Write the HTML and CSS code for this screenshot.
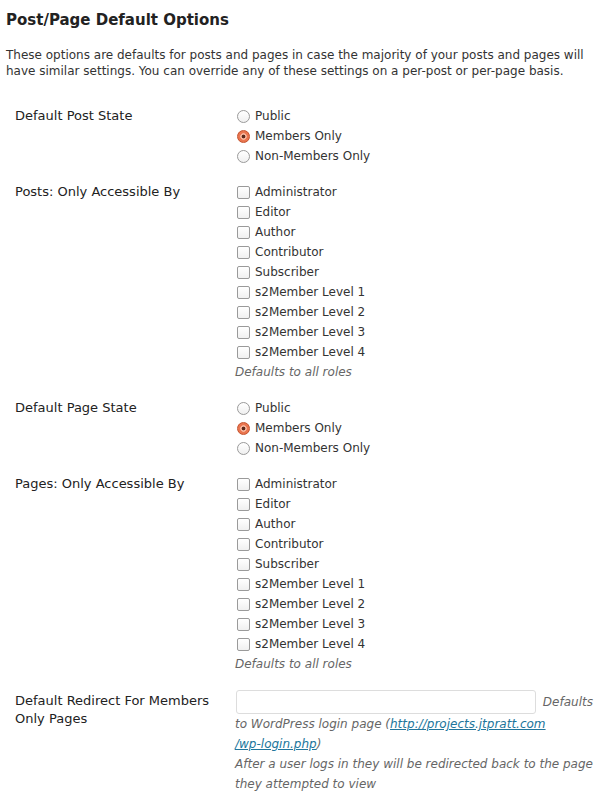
FILE: index.html
```html
<!DOCTYPE html>
<html lang="en">
<head>
  <meta charset="UTF-8" />
  <title>Post/Page Default Options</title>
  <link rel="stylesheet" href="styles.css">
</head>
<body>
  <div class="wrap">
    <h3>Post/Page Default Options</h3>
    <p class="intro">These options are defaults for posts and pages in case the majority of your posts and pages will have similar settings. You can override any of these settings on a per-post or per-page basis.</p>

    <div class="form-table">
      <!-- Posts -->
      <div class="row">
        <div class="label">Default Post State</div>
        <div class="field">
          <label class="opt"><input type="radio" name="post_state" /> Public</label>
          <label class="opt"><input type="radio" name="post_state" checked /> Members Only</label>
          <label class="opt"><input type="radio" name="post_state" /> Non-Members Only</label>
        </div>
      </div>

      <div class="row">
        <div class="label">Posts: Only Accessible By</div>
        <div class="field">
          <label class="opt"><input type="checkbox" /> Administrator</label>
          <label class="opt"><input type="checkbox" /> Editor</label>
          <label class="opt"><input type="checkbox" /> Author</label>
          <label class="opt"><input type="checkbox" /> Contributor</label>
          <label class="opt"><input type="checkbox" /> Subscriber</label>
          <label class="opt"><input type="checkbox" /> s2Member Level 1</label>
          <label class="opt"><input type="checkbox" /> s2Member Level 2</label>
          <label class="opt"><input type="checkbox" /> s2Member Level 3</label>
          <label class="opt"><input type="checkbox" /> s2Member Level 4</label>
          <span class="description">Defaults to all roles</span>
        </div>
      </div>

      <!-- Pages -->
      <div class="row">
        <div class="label">Default Page State</div>
        <div class="field">
          <label class="opt"><input type="radio" name="page_state" /> Public</label>
          <label class="opt"><input type="radio" name="page_state" checked /> Members Only</label>
          <label class="opt"><input type="radio" name="page_state" /> Non-Members Only</label>
        </div>
      </div>

      <div class="row">
        <div class="label">Pages: Only Accessible By</div>
        <div class="field">
          <label class="opt"><input type="checkbox" /> Administrator</label>
          <label class="opt"><input type="checkbox" /> Editor</label>
          <label class="opt"><input type="checkbox" /> Author</label>
          <label class="opt"><input type="checkbox" /> Contributor</label>
          <label class="opt"><input type="checkbox" /> Subscriber</label>
          <label class="opt"><input type="checkbox" /> s2Member Level 1</label>
          <label class="opt"><input type="checkbox" /> s2Member Level 2</label>
          <label class="opt"><input type="checkbox" /> s2Member Level 3</label>
          <label class="opt"><input type="checkbox" /> s2Member Level 4</label>
          <span class="description">Defaults to all roles</span>
        </div>
      </div>

      <div class="row">
        <div class="label label-wrap">Default Redirect For Members Only Pages</div>
        <div class="field field-text">
          <input type="text" class="regular-text" />
          <span class="description">Defaults to WordPress login page (<a href="#"><span class="nw">http://projects.jtpratt.com</span><wbr><span class="nw">/wp-login.php</span></a>)<br>After a user logs in they will be redirected back to the page they attempted to view</span>
        </div>
      </div>
    </div>
  </div>
</body>
</html>
```

FILE: styles.css
```css
body {
  margin: 0;
  background: #fff;
  color: #333;
  font-family: 'DejaVu Sans', sans-serif;
  font-size: 13px;
}

.wrap {
  padding: 0 2px 0 6px;
}

h3 {
  color: #222;
  font-size: 15px;
  font-weight: bold;
  margin: 10px 0 0;
  line-height: 20px;
}

.intro {
  margin: 17px 0 0;
  font-size: 12px;
  line-height: 16px;
  color: #333;
}

.form-table {
  margin-top: 19px;
}

.row {
  display: flex;
  padding: 8px 0;
}

.label {
  width: 220px;
  padding-left: 9px;
  flex-shrink: 0;
  line-height: 20px;
  color: #222;
}

.label-wrap {
  width: 200px;
  padding-right: 20px;
  line-height: 18px;
  margin-top: 2px;
}

.field {
  display: flex;
  flex-direction: column;
  font-size: 12px;
  line-height: 20px;
  flex: 1;
}

.opt {
  display: flex;
  align-items: center;
  gap: 5px;
}

.description {
  color: #666;
  font-style: italic;
}

.description a {
  color: #21759b;
}

.nw {
  white-space: nowrap;
}

/* native-looking controls */
input[type="radio"],
input[type="checkbox"] {
  appearance: none;
  -webkit-appearance: none;
  width: 13px;
  height: 13px;
  margin: 0 0 0 2px;
  border: 1px solid #9a9a9a;
  background: linear-gradient(#fff, #f0f0f0);
}

input[type="radio"] {
  border-radius: 50%;
}

input[type="checkbox"] {
  border-radius: 2px;
}

input[type="radio"]:checked {
  border-color: #c4512c;
  background: radial-gradient(circle, #5b2a1c 0 1.5px, #f6b39a 2.2px 3px, #ea7650 3.6px);
}

.field-text {
  display: block;
}

.regular-text {
  width: 300px;
  height: 24px;
  box-sizing: border-box;
  border: 1px solid #ddd;
  border-radius: 3px;
  background: #fff;
  margin: 0 3px 0 1px;
  vertical-align: middle;
  font: inherit;
}
```
